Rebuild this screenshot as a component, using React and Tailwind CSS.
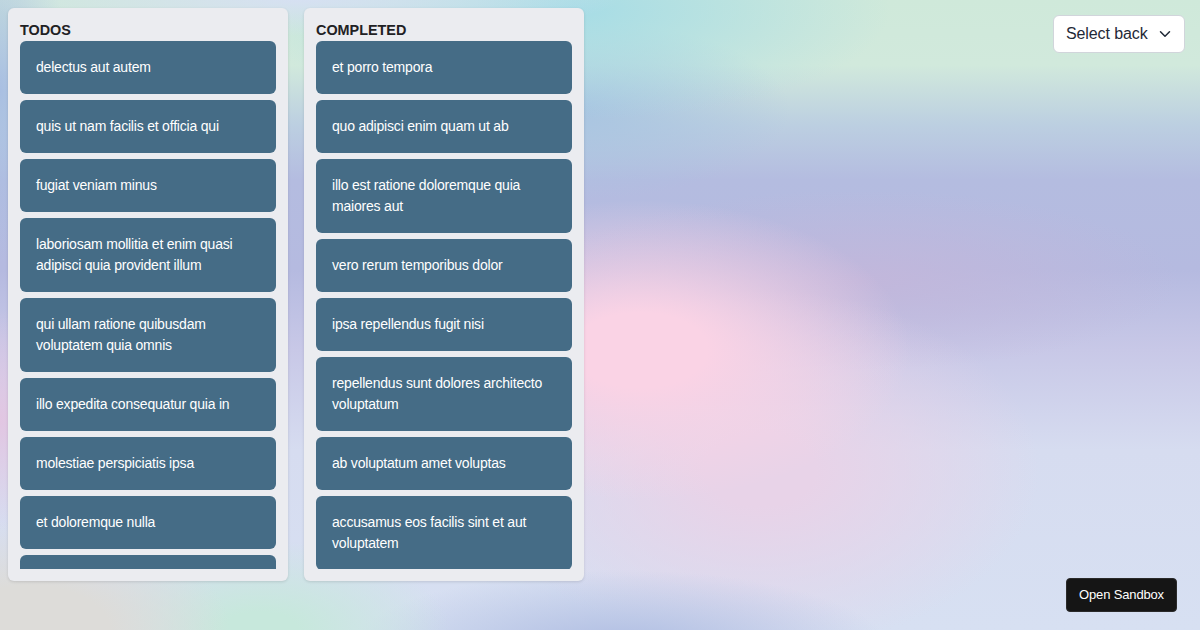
import React from 'react';
import { ChevronDown } from 'lucide-react';

const todos = [
    'delectus aut autem',
    'quis ut nam facilis et officia qui',
    'fugiat veniam minus',
    'laboriosam mollitia et enim quasi adipisci quia provident illum',
    'qui ullam ratione quibusdam voluptatem quia omnis',
    'illo expedita consequatur quia in',
    'molestiae perspiciatis ipsa',
    'et doloremque nulla',
    '',
];

const completed = [
    'et porro tempora',
    'quo adipisci enim quam ut ab',
    'illo est ratione doloremque quia maiores aut',
    'vero rerum temporibus dolor',
    'ipsa repellendus fugit nisi',
    'repellendus sunt dolores architecto voluptatum',
    'ab voluptatum amet voluptas',
    'accusamus eos facilis sint et aut voluptatem',
];

function Column({ title, items }) {
    return (
        <div className="w-[280px] h-[573px] flex flex-col rounded-md bg-[#ebecf0] p-3 shadow-[0_1px_3px_rgba(0,0,0,0.12)]">
            <h2 className="text-[14.4px] leading-[20px] font-bold uppercase text-[#1f2124] mb-[1px] shrink-0">{title}</h2>
            <div className="flex-1 min-h-0 overflow-hidden flex flex-col gap-[6px]">
                {items.map((item, i) => (
                    <div key={i} className="shrink-0 min-h-[53px] rounded-md bg-[#456c86] p-4 text-[14px] tracking-[-0.2px] leading-[21px] text-white">
                        {item}
                    </div>
                ))}
            </div>
        </div>
    );
}

export default function App() {
    return (
        <div className="w-[1200px] h-[630px] overflow-hidden flex justify-between font-['Liberation_Sans',sans-serif] bg-[radial-gradient(ellipse_320px_36px_at_300px_0px,#d6e0f2_0%,transparent_100%),radial-gradient(ellipse_70px_170px_at_0px_90px,#a9bfe2_0%,transparent_100%),radial-gradient(ellipse_70px_110px_at_0px_420px,#e2c6e2_0%,transparent_100%),radial-gradient(ellipse_200px_110px_at_30px_630px,#dddcd9_40%,transparent_100%),radial-gradient(ellipse_190px_90px_at_260px_630px,#c7e8dc_20%,transparent_100%),radial-gradient(ellipse_270px_80px_at_620px_650px,#b5c2e4_20%,transparent_100%),radial-gradient(ellipse_320px_110px_at_570px_10px,#a6dce6_0%,transparent_100%),radial-gradient(ellipse_220px_90px_at_570px_110px,#a8c4e1_0%,transparent_100%),radial-gradient(ellipse_270px_150px_at_640px_350px,#fad3e5_25%,transparent_100%),radial-gradient(ellipse_280px_180px_at_760px_470px,#e8d3e8_20%,transparent_100%),radial-gradient(ellipse_320px_90px_at_860px_280px,#c2b7db_0%,transparent_100%),linear-gradient(180deg,#cfe9da_0px,#d1e9dc_65px,#bccfe1_125px,#b4bce0_180px,#b5bae0_270px,#c8c8e7_350px,#d6dcf0_450px,#d7e0f2_630px)]">
            <div className="flex items-start gap-4 pl-2 pt-2">
                <Column title="Todos" items={todos} />
                <Column title="Completed" items={completed} />
            </div>

            <div className="flex flex-col items-end justify-between pr-[15px] pt-[15px] pb-[18px]">
                <button className="h-[38px] w-[132px] flex items-center justify-between pl-3 pr-[10px] rounded-md bg-white border border-[#d1d5db] text-[16px] tracking-[-0.1px] text-[#1f2937]">
                    Select back
                    <ChevronDown size={18} className="text-[#1f2937]" />
                </button>
                <button className="h-[34px] w-[111px] mr-2 rounded-[4px] bg-[#151515] border border-[#2a2a2a] text-[13px] tracking-[-0.15px] text-white">
                    Open Sandbox
                </button>
            </div>
        </div>
    );
}
